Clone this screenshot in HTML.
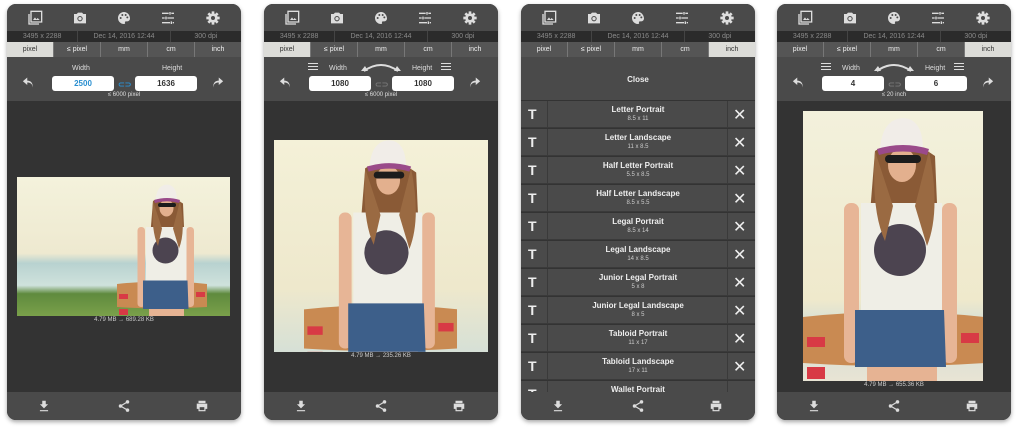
<!DOCTYPE html>
<html><head><meta charset="utf-8"><style>
*{margin:0;padding:0;box-sizing:border-box}
body{width:1024px;height:435px;background:#fff;position:relative;overflow:hidden;font-family:"Liberation Sans",sans-serif}
.ph{position:absolute;top:4px;width:234px;height:416px;background:#333;border-radius:9px;overflow:hidden;box-shadow:0 2px 4px rgba(0,0,0,.35)}
.tb{position:absolute;left:0;top:0;width:234px;height:27px;background:#4a4a4a;display:flex;justify-content:space-around;align-items:center;padding:0 6px}
.info{position:absolute;top:27px;left:0;width:234px;height:11px;background:#2b2b2b;display:flex;font-size:7px;color:#8a8a8a;line-height:11px}
.info div{flex:1;text-align:center;border-right:1px solid #444}
.units{position:absolute;top:38px;left:0;width:234px;height:15px;background:#555;display:flex;font-size:7px;color:#eee;line-height:15px}
.units div{flex:1;text-align:center;border-right:1px solid #777}
.units .sel{background:#dcdcd8;color:#333}
.ctl{position:absolute;top:53px;left:0;width:234px;height:44px;background:#4a4a4a}
.lbl{position:absolute;font-size:7px;color:#ddd}
.box{position:absolute;top:19px;height:15px;width:62px;background:#fff;border-radius:3px;font-size:8px;font-weight:bold;color:#333;text-align:center;line-height:15px}
.bb{position:absolute;left:0;bottom:0;width:234px;height:28px;background:#4a4a4a}
.photo{position:absolute;overflow:hidden}
.cap{position:absolute;font-size:6px;color:#ccc;width:234px;text-align:center;left:0}
.row{position:absolute;left:0;width:234px;height:27px;background:#4a4a4a;border-bottom:1px solid #3a3a3a}
.row .t{position:absolute;left:7px;top:5px;font-size:14px;font-weight:bold;color:#eee}
.row .x{position:absolute;left:212px;top:4px;font-size:16px;color:#eee}
.row .n{position:absolute;left:28px;width:178px;text-align:center;top:4px;font-size:8px;font-weight:bold;color:#eee}
.row .s{position:absolute;left:28px;width:178px;text-align:center;top:15px;font-size:6px;color:#ccc}
.row .d1{position:absolute;left:26px;top:0;width:1px;height:27px;background:#3a3a3a}
.row .d2{position:absolute;left:206px;top:0;width:1px;height:27px;background:#3a3a3a}
</style></head><body>

<svg width="0" height="0" style="position:absolute">
<defs>
<symbol id="girl" viewBox="0 0 180 270">
<path d="M0 206 Q90 196 181 206 L181 252 Q90 258 0 252Z" fill="#c98a52"/>
<rect x="4" y="226" width="18" height="10" fill="#d83a45"/><rect x="4" y="256" width="18" height="12" fill="#d83a45"/>
<rect x="41" y="92" width="15" height="160" rx="7" fill="#e7b596"/>
<rect x="139" y="92" width="15" height="160" rx="7" fill="#e7b596"/>
<path d="M72 40 Q100 22 132 45 L136 140 L64 140Z" fill="#8a5a36"/>
<path d="M58 92 L139 92 L139 206 L58 206Z" fill="#efeee6"/>
<circle cx="97" cy="139" r="26" fill="#4c4450"/>
<path d="M72 40 Q68 100 82 130 L90 95 Z M126 40 Q138 100 124 135 L112 95Z" fill="#9a6a42"/>
<ellipse cx="99" cy="54" rx="14" ry="17" fill="#e3b08e"/>
<rect x="82" y="44" width="36" height="8" rx="4" fill="#1c1c1c"/>
<path d="M77 39 Q79 8 100 7 Q120 8 120 39Z" fill="#f1ede8"/>
<path d="M74 38 Q100 30 126 38 L124 44 Q100 37 76 44Z" fill="#9a4a8a"/>
<path d="M52 199 L141 199 L143 256 L52 256Z" fill="#3d5f8a"/>
<rect x="64" y="256" width="70" height="14" fill="#e6b393"/>
<rect x="158" y="222" width="18" height="10" fill="#d83a45"/>
</symbol>
<symbol id="gal" viewBox="0 0 24 24"><path d="M4 6H2v16h16v-2H4z" fill="#ddd"/><path d="M6 2h16v16H6z" fill="none" stroke="#ddd" stroke-width="2"/><path d="M9 15l3-4 2 3 2-2 3 3z" fill="#ddd"/></symbol>
<symbol id="cam" viewBox="0 0 24 24"><path d="M3 6h4l2-2h6l2 2h4v14H3z" fill="#ddd"/><circle cx="12" cy="13" r="4" fill="#4a4a4a"/><circle cx="12" cy="13" r="2.5" fill="#ddd"/></symbol>
<symbol id="pal" viewBox="0 0 24 24"><path d="M12 3a9 9 0 000 18c1.5 0 2-1 1.5-2s0-2 1.5-2H17a4 4 0 004-4c0-5.5-4-10-9-10z" fill="#ddd"/><circle cx="7" cy="12" r="1.5" fill="#4a4a4a"/><circle cx="9.5" cy="7.5" r="1.5" fill="#4a4a4a"/><circle cx="14.5" cy="7.5" r="1.5" fill="#4a4a4a"/><circle cx="17" cy="11" r="1.5" fill="#4a4a4a"/></symbol>
<symbol id="tun" viewBox="0 0 24 24"><path d="M3 5h10M17 5h4M15 3v4M3 12h4M11 12h10M9 10v4M3 19h12M19 19h2M17 17v4" stroke="#ddd" stroke-width="2" fill="none"/></symbol>
<symbol id="gear" viewBox="0 0 24 24"><circle cx="12" cy="12" r="7" fill="#ddd"/><path d="M12 2v20M2 12h20M5 5l14 14M19 5L5 19" stroke="#ddd" stroke-width="4"/><circle cx="12" cy="12" r="3" fill="#4a4a4a"/></symbol>
<symbol id="dl" viewBox="0 0 24 24"><path d="M9 3h6v6h4l-7 7-7-7h4z M5 19h14v2H5z" fill="#ddd"/></symbol>
<symbol id="sh" viewBox="0 0 24 24"><path d="M18 5L6 12l12 7" stroke="#ddd" stroke-width="2" fill="none"/><circle cx="18" cy="5" r="3" fill="#ddd"/><circle cx="6" cy="12" r="3" fill="#ddd"/><circle cx="18" cy="19" r="3" fill="#ddd"/></symbol>
<symbol id="pr" viewBox="0 0 24 24"><path d="M6 3h12v4H6z M3 8h18v9h-3v4H6v-4H3z" fill="#ddd"/><rect x="8" y="14" width="8" height="5" fill="#4a4a4a"/></symbol>
<symbol id="rl" viewBox="0 0 24 24"><path d="M10 4L3 10l7 6v-4c5 0 8 2 9 8 0-7-3-11-9-11z" fill="#ddd"/></symbol>
<symbol id="rr" viewBox="0 0 24 24"><path d="M14 4l7 6-7 6v-4c-5 0-8 2-9 8 0-7 3-11 9-11z" fill="#ddd"/></symbol>
</defs></svg>

<div class="ph" style="left:7px">
 <div class="tb"><svg width="16" height="16"><use href="#gal"/></svg><svg width="16" height="16"><use href="#cam"/></svg><svg width="16" height="16"><use href="#pal"/></svg><svg width="16" height="16"><use href="#tun"/></svg><svg width="16" height="16"><use href="#gear"/></svg></div>
 <div class="info"><div>3495 x 2288</div><div style="flex:1.3">Dec 14, 2016 12:44</div><div style="border:0">300 dpi</div></div>
 <div class="units"><div class="sel">pixel</div><div>≤ pixel</div><div>mm</div><div>cm</div><div style="border:0">inch</div></div>
 <div class="ctl">
  <svg style="position:absolute;left:14px;top:18px" width="15" height="15"><use href="#rl"/></svg>
  <div class="lbl" style="left:65px;top:8px">Width</div><div class="lbl" style="left:155px;top:8px">Height</div>
  <div class="box" style="left:45px;color:#2a8fd0">2500</div>
  <div style="position:absolute;left:111px;top:23px;font-size:8px;color:#2a8fd0;font-weight:bold">⊂⊃</div>
  <div class="box" style="left:128px">1636</div>
  <svg style="position:absolute;left:203px;top:18px" width="15" height="15"><use href="#rr"/></svg>
  <div class="lbl" style="left:0;width:234px;text-align:center;top:35px;font-size:6px">≤ 6000 pixel</div>
 </div>
 <div class="photo" style="left:10px;top:173px;width:213px;height:139px;background:linear-gradient(#f4f2dc 0%,#eee9d0 55%,#b8d2d0 62%,#cfe2dc 78%,#5f8a3e 84%,#7aa04a 100%)">
  <svg style="position:absolute;left:100px;top:4px" width="90" height="135"><use href="#girl"/></svg>
 </div>
 <div class="cap" style="top:313px">4.79 MB → 689.28 KB</div>
 <div class="bb"><svg style="position:absolute;left:30px;top:7px" width="14" height="14"><use href="#dl"/></svg><svg style="position:absolute;left:110px;top:7px" width="14" height="14"><use href="#sh"/></svg><svg style="position:absolute;left:188px;top:7px" width="14" height="14"><use href="#pr"/></svg></div>
</div>

<div class="ph" style="left:264px">
 <div class="tb"><svg width="16" height="16"><use href="#gal"/></svg><svg width="16" height="16"><use href="#cam"/></svg><svg width="16" height="16"><use href="#pal"/></svg><svg width="16" height="16"><use href="#tun"/></svg><svg width="16" height="16"><use href="#gear"/></svg></div>
 <div class="info"><div>3495 x 2288</div><div style="flex:1.3">Dec 14, 2016 12:44</div><div style="border:0">300 dpi</div></div>
 <div class="units"><div class="sel">pixel</div><div>≤ pixel</div><div>mm</div><div>cm</div><div style="border:0">inch</div></div>
 <div class="ctl">
  <div style="position:absolute;left:44px;top:6px;width:10px;height:7px;border-top:1.5px solid #ddd;border-bottom:1.5px solid #ddd"><div style="margin-top:1.5px;border-top:1.5px solid #ddd"></div></div>
  <div style="position:absolute;left:177px;top:6px;width:10px;height:7px;border-top:1.5px solid #ddd;border-bottom:1.5px solid #ddd"><div style="margin-top:1.5px;border-top:1.5px solid #ddd"></div></div>
  <svg style="position:absolute;left:96px;top:4px" width="42" height="12"><path d="M4 10Q21 -2 38 10" stroke="#ddd" stroke-width="2" fill="none"/><path d="M1 10l7 0-3-5z M41 10l-7 0 3-5z" fill="#ddd"/></svg>
  <svg style="position:absolute;left:14px;top:18px" width="15" height="15"><use href="#rl"/></svg>
  <div class="lbl" style="left:65px;top:8px">Width</div><div class="lbl" style="left:148px;top:8px">Height</div>
  <div class="box" style="left:45px">1080</div>
  <div style="position:absolute;left:111px;top:23px;font-size:8px;color:#777;font-weight:bold">⊂⊃</div>
  <div class="box" style="left:128px">1080</div>
  <svg style="position:absolute;left:203px;top:18px" width="15" height="15"><use href="#rr"/></svg>
  <div class="lbl" style="left:0;width:234px;text-align:center;top:35px;font-size:6px">≤ 6000 pixel</div>
 </div>
 <div class="photo" style="left:10px;top:136px;width:214px;height:212px;background:linear-gradient(#f4f1d8,#eee8cc 70%,#d6e0d6)">
  <svg style="position:absolute;left:30px;top:-6px" width="153" height="230" viewBox="0 0 180 270"><use href="#girl"/></svg>
 </div>
 <div class="cap" style="top:349px">4.79 MB → 235.26 KB</div>
 <div class="bb"><svg style="position:absolute;left:30px;top:7px" width="14" height="14"><use href="#dl"/></svg><svg style="position:absolute;left:110px;top:7px" width="14" height="14"><use href="#sh"/></svg><svg style="position:absolute;left:188px;top:7px" width="14" height="14"><use href="#pr"/></svg></div>
</div>

<div class="ph" style="left:521px">
 <div class="tb"><svg width="16" height="16"><use href="#gal"/></svg><svg width="16" height="16"><use href="#cam"/></svg><svg width="16" height="16"><use href="#pal"/></svg><svg width="16" height="16"><use href="#tun"/></svg><svg width="16" height="16"><use href="#gear"/></svg></div>
 <div class="info"><div>3495 x 2288</div><div style="flex:1.3">Dec 14, 2016 12:44</div><div style="border:0">300 dpi</div></div>
 <div class="units"><div>pixel</div><div>≤ pixel</div><div>mm</div><div>cm</div><div class="sel" style="border:0">inch</div></div>
 <div class="ctl" style="height:43px"><div style="position:absolute;left:0;width:234px;top:18px;text-align:center;font-size:8px;font-weight:bold;color:#eee">Close</div></div>
 <div class="row" style="top:97px"><span class="t">T</span><div class="d1"></div><div class="n">Letter Portrait</div><div class="s">8.5 x 11</div><div class="d2"></div><span class="x">✕</span></div>
 <div class="row" style="top:125px"><span class="t">T</span><div class="d1"></div><div class="n">Letter Landscape</div><div class="s">11 x 8.5</div><div class="d2"></div><span class="x">✕</span></div>
 <div class="row" style="top:153px"><span class="t">T</span><div class="d1"></div><div class="n">Half Letter Portrait</div><div class="s">5.5 x 8.5</div><div class="d2"></div><span class="x">✕</span></div>
 <div class="row" style="top:181px"><span class="t">T</span><div class="d1"></div><div class="n">Half Letter Landscape</div><div class="s">8.5 x 5.5</div><div class="d2"></div><span class="x">✕</span></div>
 <div class="row" style="top:209px"><span class="t">T</span><div class="d1"></div><div class="n">Legal Portrait</div><div class="s">8.5 x 14</div><div class="d2"></div><span class="x">✕</span></div>
 <div class="row" style="top:237px"><span class="t">T</span><div class="d1"></div><div class="n">Legal Landscape</div><div class="s">14 x 8.5</div><div class="d2"></div><span class="x">✕</span></div>
 <div class="row" style="top:265px"><span class="t">T</span><div class="d1"></div><div class="n">Junior Legal Portrait</div><div class="s">5 x 8</div><div class="d2"></div><span class="x">✕</span></div>
 <div class="row" style="top:293px"><span class="t">T</span><div class="d1"></div><div class="n">Junior Legal Landscape</div><div class="s">8 x 5</div><div class="d2"></div><span class="x">✕</span></div>
 <div class="row" style="top:321px"><span class="t">T</span><div class="d1"></div><div class="n">Tabloid Portrait</div><div class="s">11 x 17</div><div class="d2"></div><span class="x">✕</span></div>
 <div class="row" style="top:349px"><span class="t">T</span><div class="d1"></div><div class="n">Tabloid Landscape</div><div class="s">17 x 11</div><div class="d2"></div><span class="x">✕</span></div>
 <div class="row" style="top:377px"><span class="t">T</span><div class="d1"></div><div class="n">Wallet Portrait</div><div class="d2"></div></div>
 <div class="bb"><svg style="position:absolute;left:30px;top:7px" width="14" height="14"><use href="#dl"/></svg><svg style="position:absolute;left:110px;top:7px" width="14" height="14"><use href="#sh"/></svg><svg style="position:absolute;left:188px;top:7px" width="14" height="14"><use href="#pr"/></svg></div>
</div>

<div class="ph" style="left:777px">
 <div class="tb"><svg width="16" height="16"><use href="#gal"/></svg><svg width="16" height="16"><use href="#cam"/></svg><svg width="16" height="16"><use href="#pal"/></svg><svg width="16" height="16"><use href="#tun"/></svg><svg width="16" height="16"><use href="#gear"/></svg></div>
 <div class="info"><div>3495 x 2288</div><div style="flex:1.3">Dec 14, 2016 12:44</div><div style="border:0">300 dpi</div></div>
 <div class="units"><div>pixel</div><div>≤ pixel</div><div>mm</div><div>cm</div><div class="sel" style="border:0">inch</div></div>
 <div class="ctl">
  <div style="position:absolute;left:44px;top:6px;width:10px;height:7px;border-top:1.5px solid #ddd;border-bottom:1.5px solid #ddd"><div style="margin-top:1.5px;border-top:1.5px solid #ddd"></div></div>
  <div style="position:absolute;left:177px;top:6px;width:10px;height:7px;border-top:1.5px solid #ddd;border-bottom:1.5px solid #ddd"><div style="margin-top:1.5px;border-top:1.5px solid #ddd"></div></div>
  <svg style="position:absolute;left:96px;top:4px" width="42" height="12"><path d="M4 10Q21 -2 38 10" stroke="#ddd" stroke-width="2" fill="none"/><path d="M1 10l7 0-3-5z M41 10l-7 0 3-5z" fill="#ddd"/></svg>
  <svg style="position:absolute;left:14px;top:18px" width="15" height="15"><use href="#rl"/></svg>
  <div class="lbl" style="left:65px;top:8px">Width</div><div class="lbl" style="left:148px;top:8px">Height</div>
  <div class="box" style="left:45px">4</div>
  <div style="position:absolute;left:111px;top:23px;font-size:8px;color:#777;font-weight:bold">⊂⊃</div>
  <div class="box" style="left:128px">6</div>
  <svg style="position:absolute;left:203px;top:18px" width="15" height="15"><use href="#rr"/></svg>
  <div class="lbl" style="left:0;width:234px;text-align:center;top:35px;font-size:6px">≤ 20 inch</div>
 </div>
 <div class="photo" style="left:26px;top:107px;width:180px;height:270px;background:linear-gradient(#f3f1dc,#efe9cc 70%,#d2ddd6 80%,#e8e4d4)">
  <svg style="position:absolute;left:0;top:0" width="180" height="270"><use href="#girl"/></svg>
 </div>
 <div class="cap" style="top:378px">4.79 MB → 655.36 KB</div>
 <div class="bb"><svg style="position:absolute;left:30px;top:7px" width="14" height="14"><use href="#dl"/></svg><svg style="position:absolute;left:110px;top:7px" width="14" height="14"><use href="#sh"/></svg><svg style="position:absolute;left:188px;top:7px" width="14" height="14"><use href="#pr"/></svg></div>
</div>
</body></html>
